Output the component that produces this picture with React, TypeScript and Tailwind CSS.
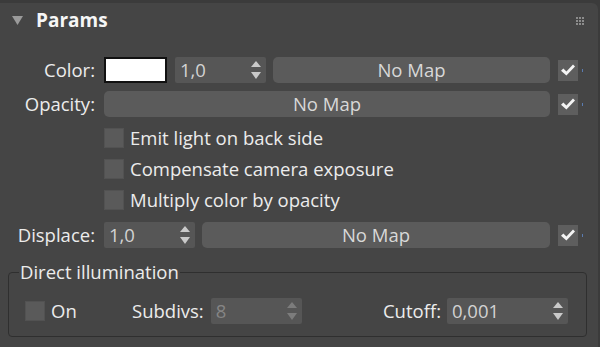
import React from "react";

const FONT = { fontFamily: '"Open Sans", "Noto Sans", "DejaVu Sans", sans-serif' };

function Arrows({ dim = false }: { dim?: boolean }) {
  const c = dim ? "#7c7c7c" : "#c9c9c9";
  return (
    <svg width="10" height="18" viewBox="0 0 10 18" className="shrink-0">
      <polygon points="5,0 10,6 0,6" fill={c} />
      <polygon points="0,11 10,11 5,18" fill={c} />
    </svg>
  );
}

function Spinner({ value, width, dim = false }: { value: string; width: string; dim?: boolean }) {
  return (
    <div
      className={`${width} h-[26px] bg-[#565656] rounded-[2px] flex items-center pl-[5px] pr-[5px] shrink-0`}
    >
      <span className={`flex-1 leading-none ${dim ? "text-[#858585]" : "text-[#d2d2d2]"}`}>{value}</span>
      <Arrows dim={dim} />
    </div>
  );
}

function MapButton({ width }: { width: string }) {
  return (
    <div
      className={`${width} h-[26px] bg-[#5b5b5b] rounded-[5px] flex items-center justify-center text-[#d8d8d8] shrink-0`}
    >
      No Map
    </div>
  );
}

function CheckOn() {
  return (
    <div className="flex items-center ml-[8px] shrink-0">
      <div className="w-[20px] h-[21px] bg-[#5e5e5e] flex items-center justify-center">
        <svg width="14" height="12" viewBox="0 0 14 12">
          <polygon points="0,6.8 2.4,4.6 5.4,7.4 12,0.4 14,2.4 5.4,11.6" fill="#f4f4f4" />
        </svg>
      </div>
      <div className="w-[1px] h-[3px] bg-[#5a7bb0] ml-[4px]" />
    </div>
  );
}

function Box() {
  return <div className="w-[20px] h-[20px] bg-[#5a5a5a] border border-[#525252] shrink-0" />;
}

function Label({ children }: { children: React.ReactNode }) {
  return <div className="w-[96px] pr-[1px] text-right shrink-0">{children}</div>;
}

export default function App() {
  return (
    <div
      className="w-[600px] h-[347px] bg-[#3b3b3b] overflow-hidden text-[#ececec] text-[18.5px] leading-none"
      style={FONT}
    >
      <div className="mt-[3px] w-[598px] h-[344px] bg-[#454545] rounded-tr-[6px] flex flex-col">
        {/* Title */}
        <div className="h-[35px] flex items-center pl-[12px] pr-[14px]">
          <svg width="11" height="9" viewBox="0 0 11 9">
            <polygon points="0,0 11,0 5.5,9" fill="#9a9a9a" />
          </svg>
          <span className="ml-[13px] font-bold text-[19px] text-[#f6f6f6]">Params</span>
          <div className="ml-auto grid grid-cols-3 gap-[1px]">
            {Array.from({ length: 9 }).map((_, i) => (
              <div key={i} className="w-[2px] h-[2px] bg-[#8c8c8c]" />
            ))}
          </div>
        </div>

        {/* Color */}
        <div className="mt-[19px] h-[26px] flex items-center">
          <Label>Color:</Label>
          <div className="ml-[8px] w-[63px] h-[26px] bg-white border-2 border-[#111] shrink-0" />
          <div className="ml-[8px]">
            <Spinner value="1,0" width="w-[91px]" />
          </div>
          <div className="ml-[7px]">
            <MapButton width="w-[277px]" />
          </div>
          <CheckOn />
        </div>

        {/* Opacity */}
        <div className="mt-[8px] h-[26px] flex items-center">
          <Label>Opacity:</Label>
          <div className="ml-[8px]">
            <MapButton width="w-[446px]" />
          </div>
          <CheckOn />
        </div>

        {/* Checkboxes */}
        <div className="mt-[11px] flex flex-col gap-[11px] pl-[104px]">
          {["Emit light on back side", "Compensate camera exposure", "Multiply color by opacity"].map((t) => (
            <div key={t} className="h-[20px] flex items-center">
              <Box />
              <span className="ml-[6px]">{t}</span>
            </div>
          ))}
        </div>

        {/* Displace */}
        <div className="mt-[12px] h-[26px] flex items-center">
          <Label>Displace:</Label>
          <div className="ml-[8px]">
            <Spinner value="1,0" width="w-[91px]" />
          </div>
          <div className="ml-[7px]">
            <MapButton width="w-[348px]" />
          </div>
          <CheckOn />
        </div>

        {/* Direct illumination */}
        <fieldset className="mt-[13px] ml-[8px] w-[579px] border border-[#2f2f2f] rounded-[4px] px-0 pb-[12px]">
          <legend className="ml-[10px] px-[1px] leading-[22px]">Direct illumination</legend>
          <div className="mt-[15px] h-[26px] flex items-center pl-[16px] pr-[18px]">
            <div className="w-[107px] flex items-center shrink-0">
              <Box />
              <span className="ml-[6px]">On</span>
            </div>
            <span>Subdivs:</span>
            <div className="ml-[7px]">
              <Spinner value="8" width="w-[91px]" dim />
            </div>
            <span className="ml-auto">Cutoff:</span>
            <div className="ml-[6px]">
              <Spinner value="0,001" width="w-[121px]" />
            </div>
          </div>
        </fieldset>
      </div>
    </div>
  );
}
